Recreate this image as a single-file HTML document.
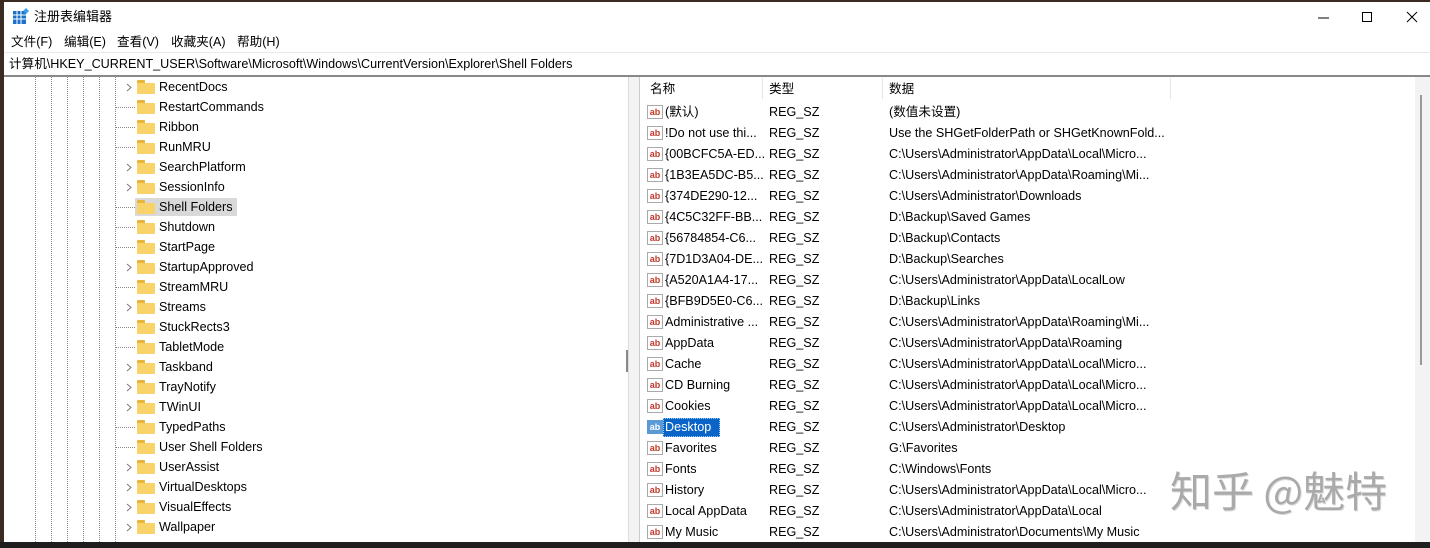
<!DOCTYPE html>
<html><head><meta charset="utf-8"><style>
*{margin:0;padding:0;box-sizing:border-box}
body{width:1430px;height:548px;overflow:hidden;background:#3a2a22;font-family:"Liberation Sans","Noto Sans CJK SC",sans-serif;font-size:12.6px;line-height:16px;color:#000;position:relative}
.win{position:absolute;left:4px;top:2px;width:1426px;height:540px;background:#fff}
.a{position:absolute;white-space:nowrap}
.fold{position:absolute;width:18px;height:14px}
.fold:before{content:"";position:absolute;left:0;top:0;width:8px;height:4px;background:#e8b43a;border-radius:1px}
.fold:after{content:"";position:absolute;left:0;top:3px;width:18px;height:11px;background:#f8d36a;border-radius:1px}
.ab{position:absolute;width:16px;height:14px;border:1px solid #aaa;background:#fff;color:#c0392b;font-size:9px;font-weight:bold;line-height:12px;text-align:center}
.vd{position:absolute;top:77px;width:0;height:465px;border-left:1px dotted #888}
</style></head><body>
<div class="win">
<svg class="a" style="left:9px;top:6px" width="16" height="16"><rect x="0" y="3" width="13" height="13" fill="#1a73c8"/><path d="M4 3v13M8 3v13M0 7h13M0 11h13" stroke="#fff" stroke-width="1"/><path d="M13 0l3 3-3 3-3-3z" fill="#3a9ee8"/></svg>
<div class="a" style="left:30px;top:7px;font-size:13px">注册表编辑器</div>
<svg class="a" style="left:1308px;top:7px" width="120" height="16"><path d="M6 9h11" stroke="#000"/><rect x="50.5" y="3.5" width="9" height="9" fill="none" stroke="#000"/><path d="M95 3l10 10M105 3l-10 10" stroke="#000"/></svg>
<div class="a" style="left:7px;top:32px">文件(F)</div>
<div class="a" style="left:60px;top:32px">编辑(E)</div>
<div class="a" style="left:113px;top:32px">查看(V)</div>
<div class="a" style="left:167px;top:32px">收藏夹(A)</div>
<div class="a" style="left:233px;top:32px">帮助(H)</div>
<div class="a" style="left:0;top:50px;width:1426px;height:1px;background:#e8e8e8"></div>
<div class="a" style="left:5px;top:54px">计算机\HKEY_CURRENT_USER\Software\Microsoft\Windows\CurrentVersion\Explorer\Shell Folders</div>
<div class="a" style="left:0;top:73px;width:1426px;height:2px;background:#888"></div>
</div>
<div class="vd" style="left:35px"></div><div class="vd" style="left:51px"></div><div class="vd" style="left:67px"></div><div class="vd" style="left:83px"></div><div class="vd" style="left:99px"></div><div class="vd" style="left:115px"></div>
<div id="tree"></div>
<div class="a" style="left:628px;top:77px;width:12px;height:465px;background:#f3f3f3;border-left:1px solid #ddd;border-right:1px solid #ccc"></div>
<div class="a" style="left:626px;top:350px;width:2px;height:22px;background:#888"></div>
<div class="a" style="left:1415px;top:77px;width:15px;height:465px;background:#f3f3f3"></div>
<div class="a" style="left:1420px;top:95px;width:2px;height:270px;background:#999"></div>
<div class="a" style="left:762px;top:78px;width:1px;height:21px;background:#e5e5e5"></div>
<div class="a" style="left:882px;top:78px;width:1px;height:21px;background:#e5e5e5"></div>
<div class="a" style="left:1170px;top:78px;width:1px;height:21px;background:#e5e5e5"></div>
<div class="a" style="left:650px;top:81px">名称</div>
<div class="a" style="left:769px;top:81px">类型</div>
<div class="a" style="left:889px;top:81px">数据</div>
<div id="list"></div>
<div class="a" style="left:1170px;top:462px;font-size:42px;line-height:56px;color:#aaa;font-family:'Noto Sans CJK SC',sans-serif;text-shadow:1px 1px 0 #ddd">知乎 @魅特</div>
<div class="a" style="left:0;top:542px;width:1430px;height:6px;background:#1e1e1e"></div>
<script>
var t=[["RecentDocs",1],["RestartCommands",0],["Ribbon",0],["RunMRU",0],["SearchPlatform",1],["SessionInfo",1],["Shell Folders",0],["Shutdown",0],["StartPage",0],["StartupApproved",1],["StreamMRU",0],["Streams",1],["StuckRects3",0],["TabletMode",0],["Taskband",1],["TrayNotify",1],["TWinUI",1],["TypedPaths",0],["User Shell Folders",0],["UserAssist",1],["VirtualDesktops",1],["VisualEffects",1],["Wallpaper",1]];
var h="";t.forEach(function(r,i){var y=77+i*20;
if(r[0]=="Shell Folders")h+='<div class="a" style="left:135px;top:'+(y+1)+'px;width:102px;height:18px;background:#d9d9d9"></div>';
if(r[1])h+='<svg class="a" style="left:125px;top:'+(y+6)+'px" width="8" height="9"><path d="M2 1l4 3.5-4 3.5" fill="none" stroke="#777"/></svg>';
else h+='<div class="a" style="left:116px;top:'+(y+10)+'px;width:19px;border-top:1px dotted #888"></div>';
h+='<div class="fold" style="left:137px;top:'+(y+3)+'px"></div><div class="a" style="left:159px;top:'+(y+2)+'px">'+r[0]+'</div>';});
document.getElementById("tree").innerHTML=h;
var L=[["(默认)","(数值未设置)"],["!Do not use thi...","Use the SHGetFolderPath or SHGetKnownFold..."],["{00BCFC5A-ED...","C:\\Users\\Administrator\\AppData\\Local\\Micro..."],["{1B3EA5DC-B5...","C:\\Users\\Administrator\\AppData\\Roaming\\Mi..."],["{374DE290-12...","C:\\Users\\Administrator\\Downloads"],["{4C5C32FF-BB...","D:\\Backup\\Saved Games"],["{56784854-C6...","D:\\Backup\\Contacts"],["{7D1D3A04-DE...","D:\\Backup\\Searches"],["{A520A1A4-17...","C:\\Users\\Administrator\\AppData\\LocalLow"],["{BFB9D5E0-C6...","D:\\Backup\\Links"],["Administrative ...","C:\\Users\\Administrator\\AppData\\Roaming\\Mi..."],["AppData","C:\\Users\\Administrator\\AppData\\Roaming"],["Cache","C:\\Users\\Administrator\\AppData\\Local\\Micro..."],["CD Burning","C:\\Users\\Administrator\\AppData\\Local\\Micro..."],["Cookies","C:\\Users\\Administrator\\AppData\\Local\\Micro..."],["Desktop","C:\\Users\\Administrator\\Desktop"],["Favorites","G:\\Favorites"],["Fonts","C:\\Windows\\Fonts"],["History","C:\\Users\\Administrator\\AppData\\Local\\Micro..."],["Local AppData","C:\\Users\\Administrator\\AppData\\Local"],["My Music","C:\\Users\\Administrator\\Documents\\My Music"]];
h="";L.forEach(function(r,i){var y=102+i*21;var s=r[0]=="Desktop";
if(s)h+='<div class="a" style="left:663px;top:'+(y+1)+'px;width:57px;height:19px;background:#0a64c8;border:1px dotted #9cf"></div>';
h+='<div class="ab" style="left:647px;top:'+(y+3)+'px;'+(s?'background:#5b9bd5;color:#fff;border-color:#5b9bd5':'')+'">ab</div>';
h+='<div class="a" style="left:665px;top:'+(y+2)+'px;'+(s?'color:#fff':'')+'">'+r[0]+'</div><div class="a" style="left:769px;top:'+(y+2)+'px">REG_SZ</div><div class="a" style="left:889px;top:'+(y+2)+'px">'+r[1]+'</div>';});
document.getElementById("list").innerHTML=h;
</script>
</body></html>
